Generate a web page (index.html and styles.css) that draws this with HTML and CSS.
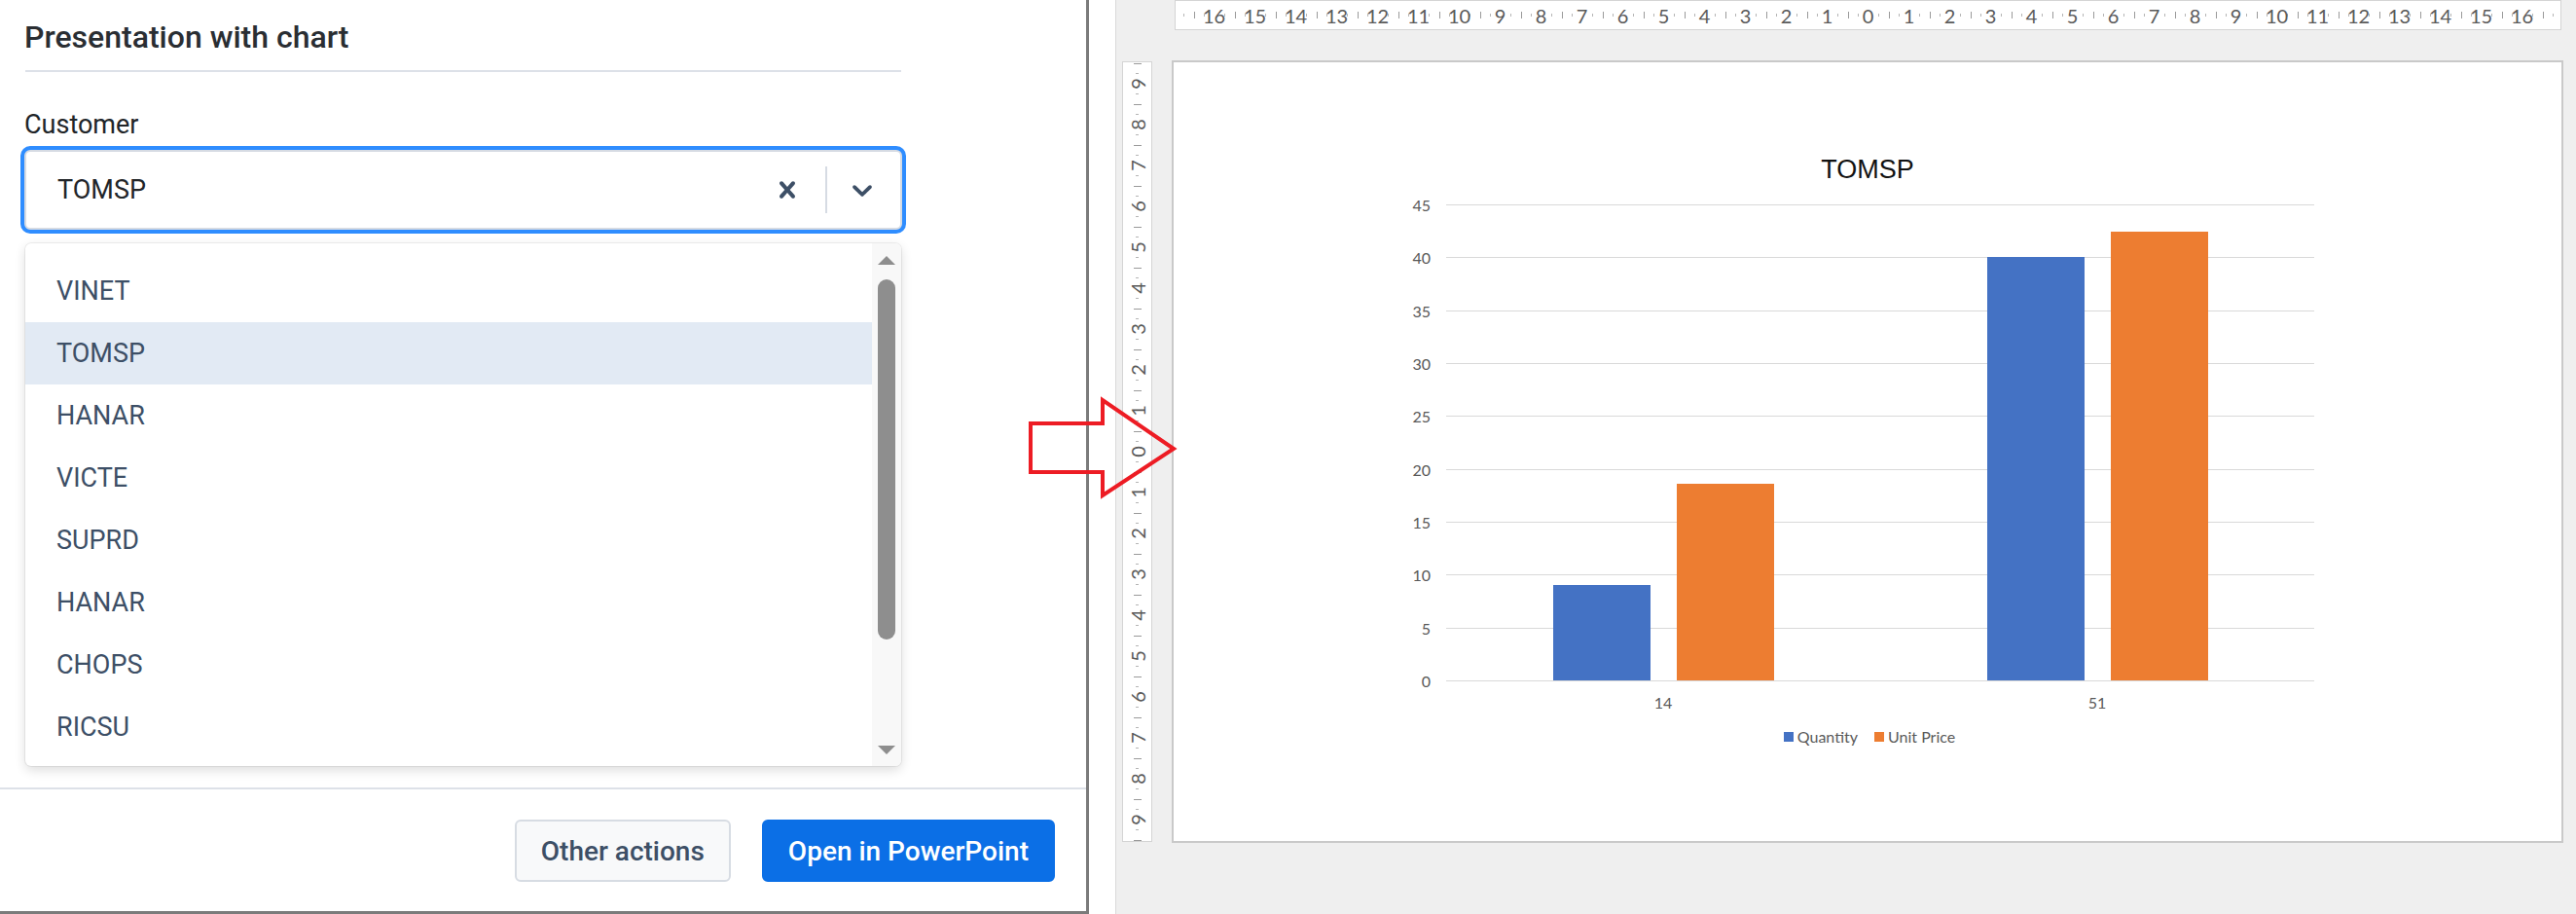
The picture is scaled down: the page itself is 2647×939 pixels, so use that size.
FILE: index.html
```html
<!DOCTYPE html>
<html>
<head>
<meta charset="utf-8">
<title>Presentation with chart</title>
<link rel="stylesheet" href="styles.css">
</head>
<body>
<div class="app">
  <section class="panel">
    <header class="panel-head">
      <h1 class="title">Presentation with chart</h1>
    </header>
    <div class="panel-body">
      <label class="field-label">Customer</label>
      <div class="select">
        <div class="control">
          <span class="value">TOMSP</span>
          <span class="indicators">
            <svg class="ico clear" viewBox="0 0 20 20"><path d="M14.348 14.849c-0.469 0.469-1.229 0.469-1.697 0l-2.651-3.030-2.651 3.029c-0.469 0.469-1.229 0.469-1.697 0-0.469-0.469-0.469-1.229 0-1.697l2.758-3.150-2.759-3.152c-0.469-0.469-0.469-1.228 0-1.697s1.228-0.469 1.697 0l2.652 3.031 2.651-3.031c0.469-0.469 1.228-0.469 1.697 0s0.469 1.229 0 1.697l-2.758 3.152 2.758 3.150c0.469 0.469 0.469 1.229 0 1.698z"/></svg>
            <span class="ind-sep"></span>
            <svg class="ico chev" viewBox="0 0 20 20"><path d="M4.516 7.548c0.436-0.446 1.043-0.481 1.576 0l3.908 3.747 3.908-3.747c0.533-0.481 1.141-0.446 1.574 0 0.436 0.445 0.408 1.197 0 1.615-0.406 0.418-4.695 4.502-4.695 4.502-0.217 0.223-0.502 0.335-0.787 0.335s-0.57-0.112-0.789-0.335c0 0-4.287-4.084-4.695-4.502s-0.436-1.170 0-1.615z"/></svg>
          </span>
        </div>
        <div class="menu">
          <ul class="options">
            <li>VINET</li>
            <li class="active">TOMSP</li>
            <li>HANAR</li>
            <li>VICTE</li>
            <li>SUPRD</li>
            <li>HANAR</li>
            <li>CHOPS</li>
            <li>RICSU</li>
          </ul>
          <div class="sbar">
            <span class="sb-up"></span>
            <span class="sb-thumb"></span>
            <span class="sb-down"></span>
          </div>
        </div>
      </div>
    </div>
    <footer class="panel-foot">
      <button class="btn btn-light">Other actions</button>
      <button class="btn btn-primary">Open in PowerPoint</button>
    </footer>
  </section>

  <section class="viewer">
    <div class="gutter"></div>
    <div class="canvas">
      <div class="hruler">
        <span class="hc end-l"></span>
        <span class="hc"><b>16</b></span><span class="hc"><b>15</b></span><span class="hc"><b>14</b></span><span class="hc"><b>13</b></span>
        <span class="hc"><b>12</b></span><span class="hc"><b>11</b></span><span class="hc"><b>10</b></span><span class="hc"><b>9</b></span>
        <span class="hc"><b>8</b></span><span class="hc"><b>7</b></span><span class="hc"><b>6</b></span><span class="hc"><b>5</b></span>
        <span class="hc"><b>4</b></span><span class="hc"><b>3</b></span><span class="hc"><b>2</b></span><span class="hc"><b>1</b></span>
        <span class="hc"><b>0</b></span>
        <span class="hc"><b>1</b></span><span class="hc"><b>2</b></span><span class="hc"><b>3</b></span><span class="hc"><b>4</b></span>
        <span class="hc"><b>5</b></span><span class="hc"><b>6</b></span><span class="hc"><b>7</b></span><span class="hc"><b>8</b></span>
        <span class="hc"><b>9</b></span><span class="hc"><b>10</b></span><span class="hc"><b>11</b></span><span class="hc"><b>12</b></span>
        <span class="hc"><b>13</b></span><span class="hc"><b>14</b></span><span class="hc"><b>15</b></span><span class="hc"><b>16</b></span>
        <span class="hc end-r"></span>
      </div>
      <div class="vruler">
        <span class="vc end-t"></span>
        <span class="vc"><b>9</b></span><span class="vc"><b>8</b></span><span class="vc"><b>7</b></span><span class="vc"><b>6</b></span>
        <span class="vc"><b>5</b></span><span class="vc"><b>4</b></span><span class="vc"><b>3</b></span><span class="vc"><b>2</b></span>
        <span class="vc"><b>1</b></span>
        <span class="vc"><b>0</b></span>
        <span class="vc"><b>1</b></span><span class="vc"><b>2</b></span><span class="vc"><b>3</b></span><span class="vc"><b>4</b></span>
        <span class="vc"><b>5</b></span><span class="vc"><b>6</b></span><span class="vc"><b>7</b></span><span class="vc"><b>8</b></span>
        <span class="vc"><b>9</b></span>
        <span class="vc end-b"></span>
      </div>
      <div class="slide">
        <div class="chart-title">TOMSP</div>
        <div class="plot-row">
          <div class="yaxis">
            <span>45</span><span>40</span><span>35</span><span>30</span><span>25</span>
            <span>20</span><span>15</span><span>10</span><span>5</span><span>0</span>
          </div>
          <div class="plot">
            <div class="cat">
              <div class="bar q" style="height:20%"></div>
              <div class="bar p" style="height:41.33%"></div>
            </div>
            <div class="cat">
              <div class="bar q" style="height:88.89%"></div>
              <div class="bar p" style="height:94.22%"></div>
            </div>
          </div>
        </div>
        <div class="xaxis">
          <span>14</span><span>51</span>
        </div>
        <div class="legend">
          <span class="lg"><i class="sw q"></i>Quantity</span>
          <span class="lg"><i class="sw p"></i>Unit Price</span>
        </div>
      </div>
    </div>
  </section>

  <svg class="arrow" viewBox="1050 400 170 120">
    <polygon points="1059,435 1133,435 1133,411 1206,461 1133,509 1133,485 1059,485" />
  </svg>
</div>
</body>
</html>
```

FILE: styles.css
```css
html, body {
  margin: 0;
  padding: 0;
}

body {
  width: 2647px;
  height: 939px;
  overflow: hidden;
  background: #ffffff;
  font-family: Roboto, "Noto Sans", Arial, sans-serif;
}

.app {
  position: relative;
  display: flex;
  height: 939px;
}

/* ---------- left panel ---------- */
.panel {
  flex: none;
  width: 1119px;
  height: 939px;
  box-sizing: border-box;
  border-right: 3px solid #7b7b7b;
  border-bottom: 3px solid #7b7b7b;
  background: #ffffff;
  display: flex;
  flex-direction: column;
}

.panel-head {
  margin-left: 26px;
  width: 900px;
  padding-top: 19px;
  padding-bottom: 15px;
  border-bottom: 2px solid #dde1e8;
}

.title {
  margin: 0 0 0 -1px;
  font-size: 32px;
  line-height: 38px;
  font-weight: 500;
  color: #2a2e33;
}

.panel-body {
  margin-left: 25px;
  width: 902px;
}

.field-label {
  display: block;
  margin-top: 38px;
  font-size: 27px;
  line-height: 32px;
  color: #212529;
}

.select {
  margin-top: 10px;
}

.control {
  height: 82px;
  box-sizing: border-box;
  border: 2px solid #d6dbe3;
  border-radius: 6px;
  box-shadow: 0 0 0 4px #2f8dff;
  display: flex;
  align-items: center;
  padding-left: 32px;
  background: #ffffff;
}

.value {
  flex: 1;
  font-size: 27px;
  color: #222529;
}

.indicators {
  display: flex;
  align-items: center;
  padding-right: 22px;
}

.ico {
  display: block;
  width: 34px;
  height: 34px;
  fill: #3d4f66;
}

.clear {
  margin-right: 22px;
}

.ind-sep {
  width: 2px;
  height: 48px;
  background: #d6dbe3;
}

.chev {
  margin-left: 19px;
}

.menu {
  margin: 14px 1px 0 1px;
  height: 537px;
  border-radius: 6px;
  background: #ffffff;
  box-shadow: 0 0 0 1px rgba(0, 0, 0, 0.06), 0 4px 12px rgba(0, 0, 0, 0.14);
  display: flex;
  overflow: hidden;
}

.options {
  flex: 1;
  list-style: none;
  margin: 0;
  padding: 17px 0 8px 0;
}

.options li {
  height: 64px;
  display: flex;
  align-items: center;
  padding-left: 32px;
  font-size: 27px;
  color: #3d4f66;
}

.options li.active {
  background: #e2eaf4;
}

.sbar {
  flex: none;
  width: 30px;
  background: #f8f8f8;
  display: flex;
  flex-direction: column;
  align-items: center;
}

.sb-up {
  margin-top: 13px;
  width: 0;
  height: 0;
  border-left: 9px solid transparent;
  border-right: 9px solid transparent;
  border-bottom: 9px solid #8e8e8e;
}

.sb-thumb {
  margin-top: 15px;
  width: 18px;
  height: 370px;
  border-radius: 9px;
  background: #8e8e8e;
}

.sb-down {
  margin-top: auto;
  margin-bottom: 12px;
  width: 0;
  height: 0;
  border-left: 9px solid transparent;
  border-right: 9px solid transparent;
  border-top: 9px solid #8e8e8e;
}

.panel-foot {
  margin-top: 22px;
  border-top: 2px solid #dde1e8;
  padding: 31px 32px 0 0;
  display: flex;
  justify-content: flex-end;
  gap: 32px;
}

.btn {
  height: 64px;
  box-sizing: border-box;
  padding: 0 25px;
  border-radius: 6px;
  border: 2px solid;
  font-family: Roboto, "Noto Sans", Arial, sans-serif;
  font-size: 28px;
  font-weight: 500;
}

.btn-light {
  background: #f8f9fa;
  border-color: #d7dce3;
  color: #3d4f66;
}

.btn-primary {
  background: #0b6fe6;
  border-color: #0b6fe6;
  color: #ffffff;
}

/* ---------- right viewer ---------- */
.viewer {
  flex: 1;
  display: flex;
  background: #efefef;
}

.gutter {
  flex: none;
  width: 27px;
  background: #ffffff;
  border-right: 1px solid #d9d9d9;
}

.canvas {
  display: grid;
  grid-template-columns: 6px 31px 20px 1430px;
  grid-template-rows: 31px 31px 804px;
}

.hruler {
  grid-column: 4;
  grid-row: 1;
  margin: 0 2px 0 3px;
  box-sizing: border-box;
  border: 1px solid #d4d4d4;
  background: #ffffff;
  display: flex;
  justify-content: center;
  overflow: hidden;
}

.hc {
  flex: none;
  width: 42px;
  display: flex;
  align-items: center;
  justify-content: center;
  background-image:
    linear-gradient(#9a9a9a, #9a9a9a),
    linear-gradient(#b5b5b5, #b5b5b5),
    linear-gradient(#b5b5b5, #b5b5b5);
  background-size: 1px 7px, 1px 3px, 1px 3px;
  background-position: 0 center, 10px center, 31px center;
  background-repeat: no-repeat;
}

.hc b,
.vc b {
  font-family: Lato, "Liberation Sans", sans-serif;
  font-weight: 400;
  font-size: 20px;
  line-height: 1;
  color: #5a5a5a;
}

.hc.end-l {
  width: 21px;
  background-image: linear-gradient(#b5b5b5, #b5b5b5);
  background-size: 1px 3px;
  background-position: 10px center;
}

.hc.end-r {
  width: 21px;
  background-image:
    linear-gradient(#9a9a9a, #9a9a9a),
    linear-gradient(#b5b5b5, #b5b5b5);
  background-size: 1px 7px, 1px 3px;
  background-position: 0 center, 10px center;
}

.vruler {
  grid-column: 2;
  grid-row: 3;
  margin: 1px 0;
  box-sizing: border-box;
  border: 1px solid #d4d4d4;
  background: #ffffff;
  display: flex;
  flex-direction: column;
  justify-content: center;
  overflow: hidden;
}

.vc {
  flex: none;
  height: 42px;
  display: flex;
  align-items: center;
  justify-content: center;
  background-image:
    linear-gradient(#9a9a9a, #9a9a9a),
    linear-gradient(#b5b5b5, #b5b5b5),
    linear-gradient(#b5b5b5, #b5b5b5);
  background-size: 8px 1px, 3px 1px, 3px 1px;
  background-position: center 0, center 10px, center 31px;
  background-repeat: no-repeat;
}

.vc b {
  display: inline-block;
  transform: rotate(-90deg);
}

.vc.end-t {
  height: 21px;
  background-image: linear-gradient(#b5b5b5, #b5b5b5);
  background-size: 3px 1px;
  background-position: center 10px;
}

.vc.end-b {
  height: 21px;
  background-image:
    linear-gradient(#9a9a9a, #9a9a9a),
    linear-gradient(#b5b5b5, #b5b5b5);
  background-size: 8px 1px, 3px 1px;
  background-position: center 0, center 10px;
}

.slide {
  grid-column: 4;
  grid-row: 3;
  box-sizing: border-box;
  border: 2px solid #c9c9c9;
  background: #ffffff;
  padding-top: 94px;
}

.chart-title {
  text-align: center;
  font-family: "Liberation Sans", Arial, sans-serif;
  font-size: 27px;
  line-height: 32px;
  color: #111111;
}

.plot-row {
  display: flex;
  margin-top: 20px;
  padding-left: 224px;
}

.yaxis {
  width: 40px;
  height: 490px;
  display: flex;
  flex-direction: column;
  justify-content: space-between;
  align-items: flex-end;
  margin-right: 16px;
}

.yaxis span {
  height: 1px;
  line-height: 1px;
  display: flex;
  align-items: center;
  font-family: Lato, "Liberation Sans", sans-serif;
  font-size: 16px;
  color: #595959;
}

.plot {
  width: 892px;
  height: 490px;
  box-sizing: border-box;
  padding-bottom: 1px;
  display: flex;
  background-image: repeating-linear-gradient(to bottom, #d9d9d9 0, #d9d9d9 1px, transparent 1px, transparent 54.333px);
}

.cat {
  flex: 1;
  display: flex;
  justify-content: center;
  align-items: flex-end;
  gap: 27px;
}

.bar {
  width: 100px;
}

.q {
  background: #4472c4;
}

.p {
  background: #ed7d31;
}

.xaxis {
  display: flex;
  margin: 12px 0 0 280px;
  width: 892px;
}

.xaxis span {
  flex: 1;
  text-align: center;
  font-family: Lato, "Liberation Sans", sans-serif;
  font-size: 16px;
  line-height: 20px;
  color: #595959;
}

.legend {
  display: flex;
  justify-content: center;
  gap: 17px;
  margin-top: 15px;
  padding-left: 4px;
}

.lg {
  display: flex;
  align-items: center;
  gap: 4px;
  font-family: Lato, "Liberation Sans", sans-serif;
  font-size: 16px;
  line-height: 20px;
  color: #595959;
}

.sw {
  display: block;
  width: 10px;
  height: 10px;
}

/* ---------- overlay arrow ---------- */
.arrow {
  position: absolute;
  left: 1050px;
  top: 400px;
  width: 170px;
  height: 120px;
  overflow: visible;
  pointer-events: none;
}

.arrow polygon {
  fill: none;
  stroke: #ed1c24;
  stroke-width: 4;
  stroke-linejoin: miter;
}
```
